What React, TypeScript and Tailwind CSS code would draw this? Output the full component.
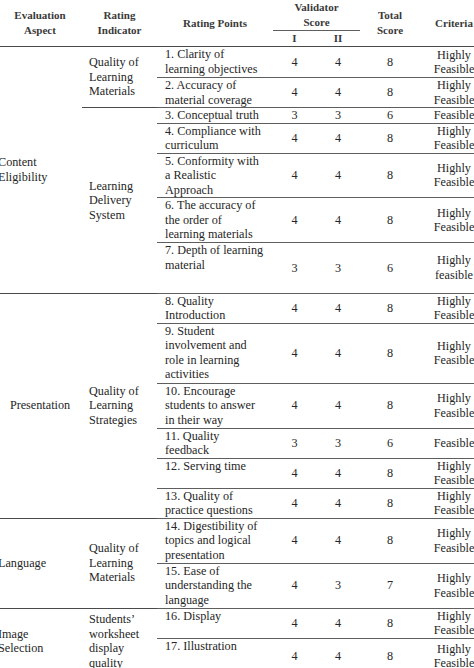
import React from "react";

type Row = { p: string[]; a: string; b: string; t: string; c: string[]; h: number };

const HF = ["Highly", "Feasible"];

const rows: Row[] = [
  { p: ["1. Clarity of", "learning objectives"], a: "4", b: "4", t: "8", c: HF, h: 31 },
  { p: ["2. Accuracy of", "material coverage"], a: "4", b: "4", t: "8", c: HF, h: 29.5 },
  { p: ["3. Conceptual truth"], a: "3", b: "3", t: "6", c: ["Feasible"], h: 15 },
  { p: ["4. Compliance with", "curriculum"], a: "4", b: "4", t: "8", c: HF, h: 30 },
  { p: ["5. Conformity with", "a Realistic", "Approach"], a: "4", b: "4", t: "8", c: HF, h: 44 },
  { p: ["6. The accuracy of", "the order of", "learning materials"], a: "4", b: "4", t: "8", c: HF, h: 45 },
  { p: ["7. Depth of learning", "material"], a: "3", b: "3", t: "6", c: ["Highly", "feasible"], h: 50.5 },
  { p: ["8. Quality", "Introduction"], a: "4", b: "4", t: "8", c: HF, h: 30 },
  { p: ["9. Student", "involvement and", "role in learning", "activities"], a: "4", b: "4", t: "8", c: HF, h: 60 },
  { p: ["10. Encourage", "students to answer", "in their way"], a: "4", b: "4", t: "8", c: HF, h: 45 },
  { p: ["11. Quality", "feedback"], a: "3", b: "3", t: "6", c: ["Feasible"], h: 30 },
  { p: ["12. Serving time"], a: "4", b: "4", t: "8", c: HF, h: 30 },
  { p: ["13. Quality of", "practice questions"], a: "4", b: "4", t: "8", c: HF, h: 30 },
  { p: ["14. Digestibility of", "topics and logical", "presentation"], a: "4", b: "4", t: "8", c: HF, h: 45 },
  { p: ["15. Ease of", "understanding the", "language"], a: "4", b: "3", t: "7", c: HF, h: 45 },
  { p: ["16. Display"], a: "4", b: "4", t: "8", c: HF, h: 30 },
  { p: ["17. Illustration"], a: "4", b: "4", t: "8", c: HF, h: 36 },
];

type Group = { start: number; span: number; lines: string[]; center?: boolean };

const aspects: Group[] = [
  { start: 0, span: 7, lines: ["Content", "Eligibility"] },
  { start: 7, span: 6, lines: ["Presentation"], center: true },
  { start: 13, span: 2, lines: ["Language"] },
  { start: 15, span: 2, lines: ["Image", "Selection"] },
];

const indicators: Group[] = [
  { start: 0, span: 2, lines: ["Quality of", "Learning", "Materials"] },
  { start: 2, span: 5, lines: ["Learning", "Delivery", "System"] },
  { start: 7, span: 6, lines: ["Quality of", "Learning", "Strategies"] },
  { start: 13, span: 2, lines: ["Quality of", "Learning", "Materials"] },
  { start: 15, span: 2, lines: ["Students\u2019", "worksheet", "display", "quality"] },
];

const Lines = ({ lines }: { lines: string[] }) => (
  <>
    {lines.map((l, i) => (
      <div key={i} className="whitespace-nowrap">
        {l}
      </div>
    ))}
  </>
);

const line = "border-b border-[#5e5e5e]";
const head = "border-b border-[#4a4a4a]";

export default function App() {
  return (
    <div
      className="w-[474px] h-[668px] overflow-hidden bg-white text-[#262626]"
      style={{ fontFamily: '"Liberation Serif", "DejaVu Serif", serif' }}
    >
      <table className="table-fixed border-collapse ml-[-10px] w-[498px] text-[12.2px] leading-[14.5px]">
        <colgroup>
          <col className="w-[92px]" />
          <col className="w-[75px]" />
          <col className="w-[116px]" />
          <col className="w-[43px]" />
          <col className="w-[44px]" />
          <col className="w-[60px]" />
          <col className="w-[68px]" />
        </colgroup>
        <thead className="font-bold text-[11px] leading-[15px] text-[#3a3a3a]">
          <tr className="h-[29px]">
            <th rowSpan={2} className={`${head} p-0 pl-[8px] text-center align-middle font-bold`}>
              <div>Evaluation</div>
              <div>Aspect</div>
            </th>
            <th rowSpan={2} className={`${head} p-0 text-center align-middle font-bold`}>
              <div>Rating</div>
              <div>Indicator</div>
            </th>
            <th rowSpan={2} className={`${head} p-0 text-center align-middle font-bold`}>
              Rating Points
            </th>
            <th colSpan={2} className="p-0 text-center align-middle font-bold border-b border-[#5e5e5e]">
              <div>Validator</div>
              <div>Score</div>
            </th>
            <th rowSpan={2} className={`${head} p-0 text-center align-middle font-bold`}>
              <div>Total</div>
              <div>Score</div>
            </th>
            <th rowSpan={2} className={`${head} p-0 text-center align-middle font-bold`}>
              Criteria
            </th>
          </tr>
          <tr className="h-[15.5px]">
            <th className={`${head} p-0 text-center align-middle font-bold`}>I</th>
            <th className={`${head} p-0 text-center align-middle font-bold`}>II</th>
          </tr>
        </thead>
        <tbody>
          {rows.map((r, i) => {
            const asp = aspects.find((g) => g.start === i);
            const ind = indicators.find((g) => g.start === i);
            return (
              <tr key={i} style={{ height: r.h }}>
                {asp && (
                  <td
                    rowSpan={asp.span}
                    className={`${head} p-0 pl-[8px] align-middle ${asp.center ? "text-center" : "text-left"}`}
                  >
                    <Lines lines={asp.lines} />
                  </td>
                )}
                {ind && (
                  <td rowSpan={ind.span} className={`${head} p-0 pl-[7px] align-middle text-left`}>
                    <Lines lines={ind.lines} />
                  </td>
                )}
                <td className={`${line} p-0 pl-[8px] align-top text-left`}>
                  <Lines lines={r.p} />
                </td>
                <td className={`${line} p-0 text-center align-middle`}>{r.a}</td>
                <td className={`${line} p-0 text-center align-middle`}>{r.b}</td>
                <td className={`${line} p-0 text-center align-middle`}>{r.t}</td>
                <td className={`${line} p-0 text-center align-middle`}>
                  <Lines lines={r.c} />
                </td>
              </tr>
            );
          })}
        </tbody>
      </table>
    </div>
  );
}
